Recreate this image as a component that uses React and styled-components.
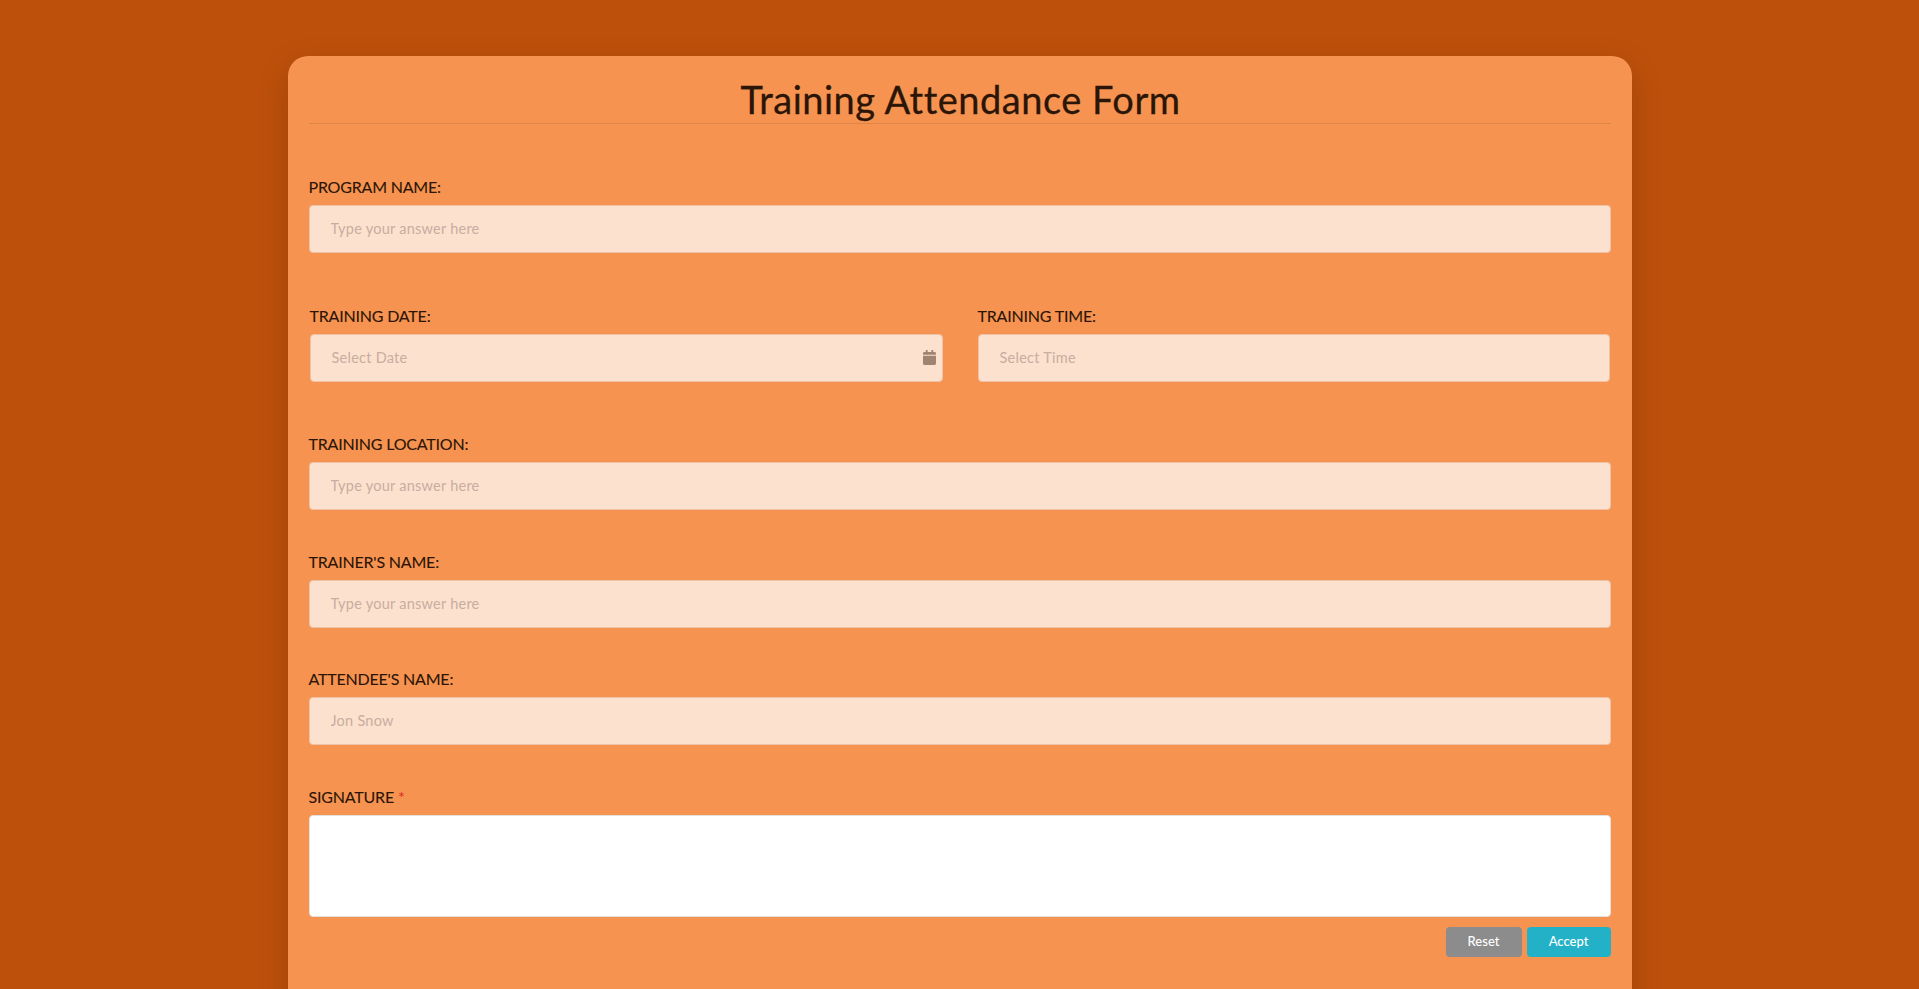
import React from "react";
import styled, { createGlobalStyle } from "styled-components";
import { FaCalendar } from "react-icons/fa";

const Global = createGlobalStyle`
  html, body { margin: 0; height: 100%; overflow: hidden; background: #bd510b; }
  #root { height: 100%; }
  * { box-sizing: border-box; }
`;

const Page = styled.div`
  height: 989px;
  overflow: hidden;
  background: #bd510b;
  padding-top: 56px;
  font-family: Lato, "Noto Sans", sans-serif;
`;

const Card = styled.form`
  width: 1344px;
  min-height: 1100px;
  margin: 0 auto;
  padding: 0 21px;
  background: #f79350;
  border-radius: 20px;
  box-shadow: 0 10px 30px rgba(60, 25, 0, 0.22);
`;

const Header = styled.header`
  height: 68px;
  border-bottom: 1px solid #de8647;
  text-align: center;
`;

const Title = styled.h1`
  margin: 0;
  padding: 20px 0 0 2px;
  font-size: 38px;
  line-height: 46px;
  font-weight: 400;
  letter-spacing: 0.5px;
  color: #2a1507;
  -webkit-text-stroke: 0.3px #2a1507;
`;

const Field = styled.div`
  margin-top: ${(p) => p.$top}px;
`;

const Row = styled.div`
  display: grid;
  grid-template-columns: 633px 632px;
  gap: 35px;
  padding: 0 1px;
  margin-top: 54px;
`;

const Label = styled.label`
  display: block;
  height: 18px;
  margin-bottom: 9px;
  font-size: 16px;
  line-height: 17px;
  color: #2a1507;
  letter-spacing: -0.2px;
  -webkit-text-stroke: 0.1px #2a1507;
`;

const Required = styled.span`
  color: #d8281e;
  -webkit-text-stroke: 0;
  margin-left: 4px;
`;

const InputWrap = styled.div`
  position: relative;
`;

const Input = styled.input`
  display: block;
  width: 100%;
  height: 48px;
  padding: 0 21px 2px;
  border: 1px solid #edc2a7;
  border-radius: 4px;
  background: #fce1ce;
  font-family: inherit;
  font-size: 14.5px;
  color: #333;
  outline: none;
  &::placeholder {
    color: #c8ada0;
    opacity: 1;
    letter-spacing: 0.25px;
  }
`;

const CalendarIcon = styled(FaCalendar)`
  position: absolute;
  right: 7px;
  top: 16px;
  width: 13px;
  height: 15px;
  color: #a08472;
`;

const SignaturePad = styled.div`
  height: 102px;
  background: #fff;
  border: 1px solid #e4e0dc;
  border-radius: 4px;
`;

const Actions = styled.div`
  display: flex;
  justify-content: flex-end;
  gap: 5px;
  margin-top: 10px;
`;

const Button = styled.button`
  width: ${(p) => p.$width}px;
  height: 30px;
  border: 0;
  border-radius: 4px;
  background: ${(p) => p.$bg};
  color: #fff;
  font-family: inherit;
  font-size: 13px;
  font-weight: 500;
  padding: 0 0 2px;
`;

const TextField = ({ label, placeholder, top }) => (
  <Field $top={top}>
    <Label>{label}</Label>
    <Input placeholder={placeholder} />
  </Field>
);

export default function App() {
  return (
    <Page>
      <Global />
      <Card>
        <Header>
          <Title>Training Attendance Form</Title>
        </Header>
        <TextField top={54} label="PROGRAM NAME:" placeholder="Type your answer here" />
        <Row>
          <Field $top={0}>
            <Label>TRAINING DATE:</Label>
            <InputWrap>
              <Input placeholder="Select Date" />
              <CalendarIcon />
            </InputWrap>
          </Field>
          <Field $top={0}>
            <Label>TRAINING TIME:</Label>
            <Input placeholder="Select Time" />
          </Field>
        </Row>
        <TextField top={53} label="TRAINING LOCATION:" placeholder="Type your answer here" />
        <TextField top={43} label="TRAINER'S NAME:" placeholder="Type your answer here" />
        <TextField top={42} label="ATTENDEE'S NAME:" placeholder="Jon Snow" />
        <Field $top={43}>
          <Label>
            SIGNATURE<Required>*</Required>
          </Label>
          <SignaturePad />
        </Field>
        <Actions>
          <Button type="button" $width={76} $bg="#8c8c8c">Reset</Button>
          <Button type="button" $width={84} $bg="#22b1c6">Accept</Button>
        </Actions>
      </Card>
    </Page>
  );
}
